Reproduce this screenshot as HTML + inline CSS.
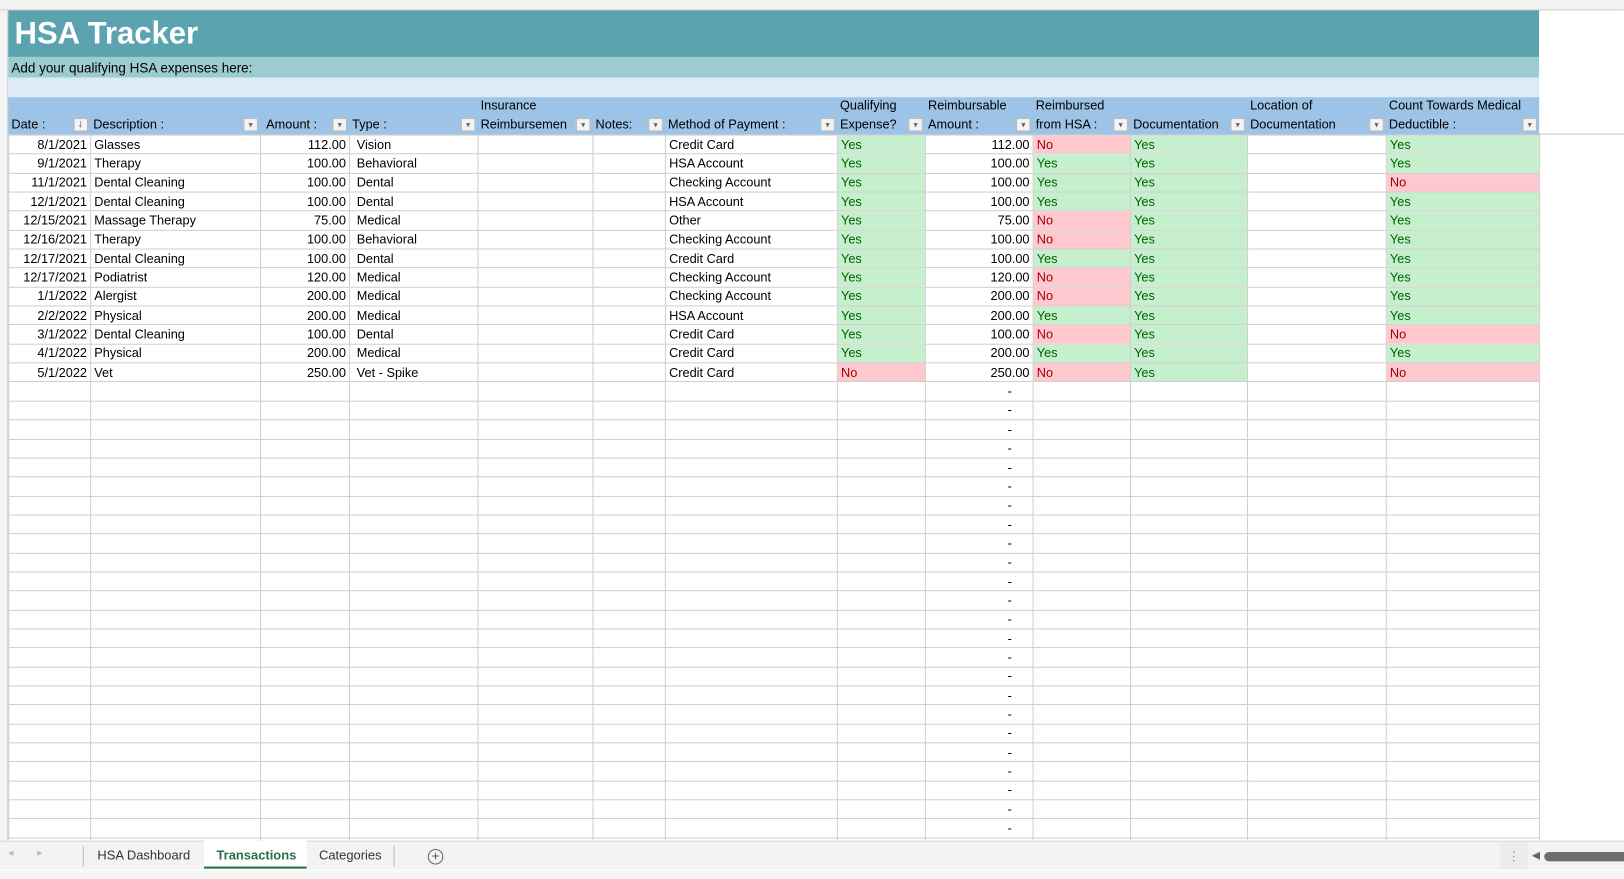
<!DOCTYPE html>
<html><head><meta charset="utf-8">
<style>
*{margin:0;padding:0;box-sizing:border-box}
html,body{width:1624px;height:879px;overflow:hidden;background:#fff}
#w{position:absolute;left:0;top:0;width:1568px;height:849px;overflow:hidden;transform-origin:0 0;transform:scale(1.03571,1.0353);font-family:"Liberation Sans",sans-serif;font-size:12.3px;color:#000}
.abs{position:absolute}
table{position:absolute;left:8px;top:130px;border-collapse:collapse;table-layout:fixed}
td{height:18.35px;border:1px solid #d0d0d0;padding:0 3px;white-space:nowrap;overflow:hidden;line-height:16px}
td.r{text-align:right}
td.d{text-align:right;padding-right:20px}
.g{background:#c6efce;color:#006100}
.n{background:#ffc7ce;color:#9c0006}
.h{position:absolute;top:94px;height:36px;background:#9dc3e6;}
.hc{position:absolute;bottom:1px;left:3px;line-height:18px;white-space:nowrap}
.fb{position:absolute;right:2px;bottom:3px;width:14px;height:13px;background:#f4f4f4;border:1px solid #b8b8b8;font-size:8px;color:#666;text-align:center;line-height:11px}
</style></head><body>
<div id="w">
<div class="abs" style="left:0;top:0;width:1568px;height:10px;background:#f3f3f3;border-bottom:1px solid #d0d0d0"></div>
<div class="abs" style="left:0;top:10px;width:8px;height:802px;background:#f3f3f3;border-right:1px solid #d0d0d0"></div>
<div class="abs" style="left:8px;top:10px;width:1478px;height:45px;background:#5ba3ae"></div>
<div class="abs" style="left:14px;top:14px;color:#fff;font-weight:bold;font-size:30px;line-height:38px">HSA Tracker</div>
<div class="abs" style="left:8px;top:55px;width:1478px;height:20px;background:#9ccbd0"></div>
<div class="abs" style="left:11px;top:58px;font-size:13px;line-height:16px">Add your qualifying HSA expenses here:</div>
<div class="abs" style="left:8px;top:75px;width:1478px;height:19px;background:#dcebf7"></div>
<div class="abs" style="left:8px;top:94px;width:1478px;height:36px;background:#9dc3e6"></div>
<div class="abs" style="left:1486px;top:129px;width:82px;height:1px;background:#c8c8c8"></div>

<div class="h" style="left:8px;width:79px"><div class="hc">Date :</div><div class="fb">⇃</div></div>
<div class="h" style="left:87px;width:164px"><div class="hc">Description :</div><div class="fb">▾</div></div>
<div class="h" style="left:251px;width:86px"><div class="hc" style="left:6px">Amount :</div><div class="fb">▾</div></div>
<div class="h" style="left:337px;width:124px"><div class="hc">Type :</div><div class="fb">▾</div></div>
<div class="h" style="left:461px;width:111px"><div class="hc">Insurance<br>Reimbursemen</div><div class="fb">▾</div></div>
<div class="h" style="left:572px;width:70px"><div class="hc">Notes:</div><div class="fb">▾</div></div>
<div class="h" style="left:642px;width:166px"><div class="hc">Method of Payment :</div><div class="fb">▾</div></div>
<div class="h" style="left:808px;width:85px"><div class="hc">Qualifying<br>Expense?</div><div class="fb">▾</div></div>
<div class="h" style="left:893px;width:104px"><div class="hc">Reimbursable<br>Amount :</div><div class="fb">▾</div></div>
<div class="h" style="left:997px;width:94px"><div class="hc">Reimbursed<br>from HSA :</div><div class="fb">▾</div></div>
<div class="h" style="left:1091px;width:113px"><div class="hc">Documentation</div><div class="fb">▾</div></div>
<div class="h" style="left:1204px;width:134px"><div class="hc">Location of<br>Documentation</div><div class="fb">▾</div></div>
<div class="h" style="left:1338px;width:148px"><div class="hc">Count Towards Medical<br>Deductible :</div><div class="fb">▾</div></div>

<table>
<colgroup><col style="width:79px"><col style="width:164px"><col style="width:86px"><col style="width:124px"><col style="width:111px"><col style="width:70px"><col style="width:166px"><col style="width:85px"><col style="width:104px"><col style="width:94px"><col style="width:113px"><col style="width:134px"><col style="width:148px"></colgroup>
<tr><td class="r">8/1/2021</td><td>Glasses</td><td class="r">112.00</td><td>&nbsp;Vision</td><td></td><td></td><td>Credit Card</td><td class="g">Yes</td><td class="r">112.00</td><td class="n">No</td><td class="g">Yes</td><td></td><td class="g">Yes</td></tr>
<tr><td class="r">9/1/2021</td><td>Therapy</td><td class="r">100.00</td><td>&nbsp;Behavioral</td><td></td><td></td><td>HSA Account</td><td class="g">Yes</td><td class="r">100.00</td><td class="g">Yes</td><td class="g">Yes</td><td></td><td class="g">Yes</td></tr>
<tr><td class="r">11/1/2021</td><td>Dental Cleaning</td><td class="r">100.00</td><td>&nbsp;Dental</td><td></td><td></td><td>Checking Account</td><td class="g">Yes</td><td class="r">100.00</td><td class="g">Yes</td><td class="g">Yes</td><td></td><td class="n">No</td></tr>
<tr><td class="r">12/1/2021</td><td>Dental Cleaning</td><td class="r">100.00</td><td>&nbsp;Dental</td><td></td><td></td><td>HSA Account</td><td class="g">Yes</td><td class="r">100.00</td><td class="g">Yes</td><td class="g">Yes</td><td></td><td class="g">Yes</td></tr>
<tr><td class="r">12/15/2021</td><td>Massage Therapy</td><td class="r">75.00</td><td>&nbsp;Medical</td><td></td><td></td><td>Other</td><td class="g">Yes</td><td class="r">75.00</td><td class="n">No</td><td class="g">Yes</td><td></td><td class="g">Yes</td></tr>
<tr><td class="r">12/16/2021</td><td>Therapy</td><td class="r">100.00</td><td>&nbsp;Behavioral</td><td></td><td></td><td>Checking Account</td><td class="g">Yes</td><td class="r">100.00</td><td class="n">No</td><td class="g">Yes</td><td></td><td class="g">Yes</td></tr>
<tr><td class="r">12/17/2021</td><td>Dental Cleaning</td><td class="r">100.00</td><td>&nbsp;Dental</td><td></td><td></td><td>Credit Card</td><td class="g">Yes</td><td class="r">100.00</td><td class="g">Yes</td><td class="g">Yes</td><td></td><td class="g">Yes</td></tr>
<tr><td class="r">12/17/2021</td><td>Podiatrist</td><td class="r">120.00</td><td>&nbsp;Medical</td><td></td><td></td><td>Checking Account</td><td class="g">Yes</td><td class="r">120.00</td><td class="n">No</td><td class="g">Yes</td><td></td><td class="g">Yes</td></tr>
<tr><td class="r">1/1/2022</td><td>Alergist</td><td class="r">200.00</td><td>&nbsp;Medical</td><td></td><td></td><td>Checking Account</td><td class="g">Yes</td><td class="r">200.00</td><td class="n">No</td><td class="g">Yes</td><td></td><td class="g">Yes</td></tr>
<tr><td class="r">2/2/2022</td><td>Physical</td><td class="r">200.00</td><td>&nbsp;Medical</td><td></td><td></td><td>HSA Account</td><td class="g">Yes</td><td class="r">200.00</td><td class="g">Yes</td><td class="g">Yes</td><td></td><td class="g">Yes</td></tr>
<tr><td class="r">3/1/2022</td><td>Dental Cleaning</td><td class="r">100.00</td><td>&nbsp;Dental</td><td></td><td></td><td>Credit Card</td><td class="g">Yes</td><td class="r">100.00</td><td class="n">No</td><td class="g">Yes</td><td></td><td class="n">No</td></tr>
<tr><td class="r">4/1/2022</td><td>Physical</td><td class="r">200.00</td><td>&nbsp;Medical</td><td></td><td></td><td>Credit Card</td><td class="g">Yes</td><td class="r">200.00</td><td class="g">Yes</td><td class="g">Yes</td><td></td><td class="g">Yes</td></tr>
<tr><td class="r">5/1/2022</td><td>Vet</td><td class="r">250.00</td><td>&nbsp;Vet - Spike</td><td></td><td></td><td>Credit Card</td><td class="n">No</td><td class="r">250.00</td><td class="n">No</td><td class="g">Yes</td><td></td><td class="n">No</td></tr>
<tr><td></td><td></td><td></td><td></td><td></td><td></td><td></td><td></td><td class="d">-</td><td></td><td></td><td></td><td></td></tr>
<tr><td></td><td></td><td></td><td></td><td></td><td></td><td></td><td></td><td class="d">-</td><td></td><td></td><td></td><td></td></tr>
<tr><td></td><td></td><td></td><td></td><td></td><td></td><td></td><td></td><td class="d">-</td><td></td><td></td><td></td><td></td></tr>
<tr><td></td><td></td><td></td><td></td><td></td><td></td><td></td><td></td><td class="d">-</td><td></td><td></td><td></td><td></td></tr>
<tr><td></td><td></td><td></td><td></td><td></td><td></td><td></td><td></td><td class="d">-</td><td></td><td></td><td></td><td></td></tr>
<tr><td></td><td></td><td></td><td></td><td></td><td></td><td></td><td></td><td class="d">-</td><td></td><td></td><td></td><td></td></tr>
<tr><td></td><td></td><td></td><td></td><td></td><td></td><td></td><td></td><td class="d">-</td><td></td><td></td><td></td><td></td></tr>
<tr><td></td><td></td><td></td><td></td><td></td><td></td><td></td><td></td><td class="d">-</td><td></td><td></td><td></td><td></td></tr>
<tr><td></td><td></td><td></td><td></td><td></td><td></td><td></td><td></td><td class="d">-</td><td></td><td></td><td></td><td></td></tr>
<tr><td></td><td></td><td></td><td></td><td></td><td></td><td></td><td></td><td class="d">-</td><td></td><td></td><td></td><td></td></tr>
<tr><td></td><td></td><td></td><td></td><td></td><td></td><td></td><td></td><td class="d">-</td><td></td><td></td><td></td><td></td></tr>
<tr><td></td><td></td><td></td><td></td><td></td><td></td><td></td><td></td><td class="d">-</td><td></td><td></td><td></td><td></td></tr>
<tr><td></td><td></td><td></td><td></td><td></td><td></td><td></td><td></td><td class="d">-</td><td></td><td></td><td></td><td></td></tr>
<tr><td></td><td></td><td></td><td></td><td></td><td></td><td></td><td></td><td class="d">-</td><td></td><td></td><td></td><td></td></tr>
<tr><td></td><td></td><td></td><td></td><td></td><td></td><td></td><td></td><td class="d">-</td><td></td><td></td><td></td><td></td></tr>
<tr><td></td><td></td><td></td><td></td><td></td><td></td><td></td><td></td><td class="d">-</td><td></td><td></td><td></td><td></td></tr>
<tr><td></td><td></td><td></td><td></td><td></td><td></td><td></td><td></td><td class="d">-</td><td></td><td></td><td></td><td></td></tr>
<tr><td></td><td></td><td></td><td></td><td></td><td></td><td></td><td></td><td class="d">-</td><td></td><td></td><td></td><td></td></tr>
<tr><td></td><td></td><td></td><td></td><td></td><td></td><td></td><td></td><td class="d">-</td><td></td><td></td><td></td><td></td></tr>
<tr><td></td><td></td><td></td><td></td><td></td><td></td><td></td><td></td><td class="d">-</td><td></td><td></td><td></td><td></td></tr>
<tr><td></td><td></td><td></td><td></td><td></td><td></td><td></td><td></td><td class="d">-</td><td></td><td></td><td></td><td></td></tr>
<tr><td></td><td></td><td></td><td></td><td></td><td></td><td></td><td></td><td class="d">-</td><td></td><td></td><td></td><td></td></tr>
<tr><td></td><td></td><td></td><td></td><td></td><td></td><td></td><td></td><td class="d">-</td><td></td><td></td><td></td><td></td></tr>
<tr><td></td><td></td><td></td><td></td><td></td><td></td><td></td><td></td><td class="d">-</td><td></td><td></td><td></td><td></td></tr>
<tr><td></td><td></td><td></td><td></td><td></td><td></td><td></td><td></td><td class="d">-</td><td></td><td></td><td></td><td></td></tr>
<tr><td></td><td></td><td></td><td></td><td></td><td></td><td></td><td></td><td class="d"></td><td></td><td></td><td></td><td></td></tr>
</table>

<div class="abs" style="left:0;top:812px;width:1568px;height:37px;background:#f3f3f3;border-top:1px solid #d6d6d6"></div>
<div class="abs" style="left:8px;top:819px;color:#bbb;font-size:10px">◂</div>
<div class="abs" style="left:36px;top:819px;color:#bbb;font-size:10px">▸</div>
<div class="abs" style="left:80px;top:817px;width:1px;height:20px;background:#bbb"></div>
<div class="abs" style="left:94px;top:819px;font-size:12.5px;color:#333">HSA Dashboard</div>
<div class="abs" style="left:197px;top:812px;width:99px;height:27px;background:#fff;border-bottom:2px solid #217346"></div>
<div class="abs" style="left:209px;top:819px;font-size:12.5px;color:#217346;font-weight:bold">Transactions</div>
<div class="abs" style="left:308px;top:819px;font-size:12.5px;color:#333">Categories</div>
<div class="abs" style="left:380px;top:817px;width:1px;height:20px;background:#bbb"></div>
<div class="abs" style="left:413px;top:820px;width:15px;height:15px;border:1.5px solid #666;border-radius:50%;color:#555;font-size:13px;line-height:11px;text-align:center">+</div>
<div class="abs" style="left:1448px;top:813px;width:27px;height:28px;background:#ececec;color:#999;font-size:12px;text-align:center;line-height:28px">⋮</div>
<div class="abs" style="left:1479px;top:821px;color:#666;font-size:10px">◀</div>
<div class="abs" style="left:1491px;top:823px;width:90px;height:9px;background:#6d6d6d;border-radius:5px"></div>
<div class="abs" style="left:0;top:840px;width:1568px;height:9px;background:#f5f5f5;border-top:1px solid #fff"></div>
</div>
</body></html>
